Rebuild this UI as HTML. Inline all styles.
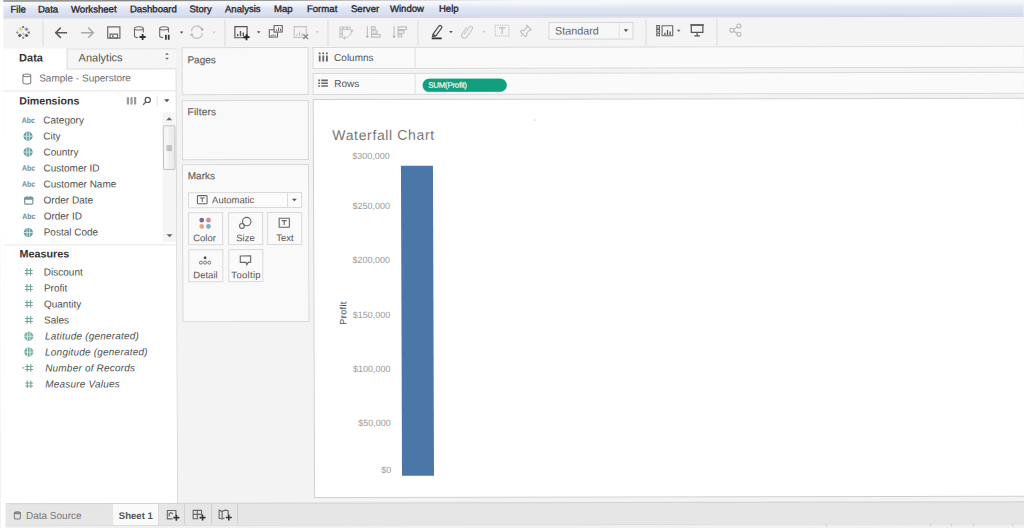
<!DOCTYPE html>
<html><head><meta charset="utf-8">
<style>
*{margin:0;padding:0;box-sizing:border-box}
html,body{width:1024px;height:528px;overflow:hidden;background:#f2f2f2;font-family:"Liberation Sans",sans-serif}
.a{position:absolute}
.t{position:absolute;white-space:nowrap;line-height:12px;height:12px}
#menu{left:4px;top:0;width:1020px;height:17px;background:linear-gradient(#fafbfd 0,#f2f4fa 25%,#e0e5f3 50%,#d9dff0 85%,#cdd3e3 100%)}
#topline{left:4px;top:0;width:1020px;height:1px;background:linear-gradient(to right,#505050,#5a5a5a 110px,#959595 250px,#d5d5d8 420px,#f3f4f8 520px)}
#menu .t{top:3px;font-size:9.6px;color:#2a2a30;-webkit-text-stroke:0.35px #2a2a30}
#tool{left:4px;top:17px;width:1020px;height:30px;background:#f4f4f4;border-top:1px solid #cdd2de}
.sep{position:absolute;top:20px;width:1px;height:26px;background:#d9d9d9}
#lp{left:4px;top:48px;width:173px;height:455px;background:#fff;border-right:1px solid #d8d8d8}
#mid{left:177px;top:47px;width:137px;height:456px;background:#f3f3f3}
.card{position:absolute;background:#f9f9f9;border:1px solid #d9d9d9}
.shelf{position:absolute;left:313px;width:711px;background:#fafafa;border:1px solid #d9d9d9;border-right:none}
#canvas{left:313px;top:99px;width:711px;height:399px;background:#fff;border:1px solid #cfcfcf;border-right:none}
#tabs{left:6px;top:503px;width:1018px;height:22px;background:#e6e6e6;border-top:1px solid #d2d2d2}
#status{left:6px;top:525px;width:1018px;height:3px;background:#f0f0f0;border-top:1px solid #dcdcdc}
.fld{font-size:10px;color:#505050}
.ic{position:absolute}
</style></head><body>
<div id="root" style="position:absolute;left:0;top:0;width:1024px;height:528px;transform-origin:320px 180px;transform:rotate(-0.1deg) skewX(0.095deg)">
<div class="a" style="left:0;top:0;width:1024px;height:528px;background:#f3f3f3"></div>
<div class="a" style="left:0;top:0;width:4px;height:528px;background:#fff"></div>

<!-- menu -->
<div id="menu" class="a">
  <div id="topline" class="a" style="left:0"></div>
  <span class="t" style="left:7px">File</span>
  <span class="t" style="left:34.5px">Data</span>
  <span class="t" style="left:67.5px">Worksheet</span>
  <span class="t" style="left:126.5px">Dashboard</span>
  <span class="t" style="left:186px">Story</span>
  <span class="t" style="left:221.5px">Analysis</span>
  <span class="t" style="left:270.5px">Map</span>
  <span class="t" style="left:303.5px">Format</span>
  <span class="t" style="left:347.5px">Server</span>
  <span class="t" style="left:386.5px">Window</span>
  <span class="t" style="left:435.5px">Help</span>
</div>

<!-- toolbar -->
<div id="tool" class="a"></div>
<div class="sep" style="left:43px"></div>
<div class="sep" style="left:225px"></div>
<div class="sep" style="left:328px"></div>
<div class="sep" style="left:418px"></div>
<div class="sep" style="left:646px"></div>
<div class="sep" style="left:717px"></div>

<!-- left data panel -->
<div id="lp" class="a"></div>
<div class="a" style="left:67px;top:48px;width:110px;height:21px;background:#f6f6f6;border-left:1px solid #dcdcdc;border-bottom:1px solid #dcdcdc;border-top:1px solid #e0e0e0"></div>
<span class="t" style="left:19.5px;top:51px;font-size:11px;font-weight:bold;color:#333">Data</span>
<span class="t" style="left:79px;top:51px;font-size:11px;color:#555">Analytics</span>
<span class="t fld" style="left:39.5px;top:72px;color:#6e6e6e">Sample - Superstore</span>
<div class="a" style="left:4px;top:90px;width:172px;height:1px;background:#e6e6e6"></div>
<span class="t" style="left:19.5px;top:94px;font-size:10.6px;font-weight:bold;color:#333">Dimensions</span>
<span class="t fld" style="left:43.5px;top:113.5px">Category</span>
<span class="t fld" style="left:43.5px;top:129.5px">City</span>
<span class="t fld" style="left:43.5px;top:145.5px">Country</span>
<span class="t fld" style="left:43.5px;top:161.5px">Customer ID</span>
<span class="t fld" style="left:43.5px;top:177.5px">Customer Name</span>
<span class="t fld" style="left:43.5px;top:193.5px">Order Date</span>
<span class="t fld" style="left:43.5px;top:209.5px">Order ID</span>
<span class="t fld" style="left:43.5px;top:225.5px">Postal Code</span>
<div class="a" style="left:4px;top:244px;width:172px;height:1px;background:#e6e6e6"></div>
<span class="t" style="left:19.2px;top:247px;font-size:10.8px;font-weight:bold;color:#333">Measures</span>
<span class="t fld" style="left:43.5px;top:266px">Discount</span>
<span class="t fld" style="left:43.5px;top:282px">Profit</span>
<span class="t fld" style="left:43.5px;top:298px">Quantity</span>
<span class="t fld" style="left:43.5px;top:314px">Sales</span>
<span class="t fld" style="left:44.5px;top:330px;font-style:italic;letter-spacing:0.2px">Latitude (generated)</span>
<span class="t fld" style="left:44.5px;top:346px;font-style:italic;letter-spacing:0.2px">Longitude (generated)</span>
<span class="t fld" style="left:44.5px;top:362px;font-style:italic;letter-spacing:0.2px">Number of Records</span>
<span class="t fld" style="left:44.5px;top:378px;font-style:italic;letter-spacing:0.2px">Measure Values</span>

<!-- middle column -->
<div id="mid" class="a"></div>
<div class="card" style="left:182px;top:47px;width:127px;height:48px"></div>
<div class="card" style="left:182px;top:100px;width:127px;height:60px"></div>
<div class="card" style="left:182px;top:164px;width:127px;height:158px"></div>
<span class="t" style="left:187.8px;top:53.5px;font-size:10px;color:#666;-webkit-text-stroke:0.2px #666">Pages</span>
<span class="t" style="left:187.8px;top:105.5px;font-size:10px;color:#666;-webkit-text-stroke:0.2px #666;letter-spacing:0.2px">Filters</span>
<span class="t" style="left:187.8px;top:170px;font-size:10px;color:#666;-webkit-text-stroke:0.2px #666">Marks</span>
<div class="a" style="left:188px;top:192px;width:114px;height:16px;background:#fbfbfb;border:1px solid #dadada"></div>
<div class="a" style="left:287px;top:193px;width:1px;height:14px;background:#dadada"></div>
<span class="t" style="left:212px;top:194px;font-size:9.5px;color:#555">Automatic</span>
<div class="card" style="left:188px;top:212px;width:35px;height:33px;background:#fafafa"></div>
<div class="card" style="left:228px;top:212px;width:35px;height:33px;background:#fafafa"></div>
<div class="card" style="left:267px;top:212px;width:35px;height:33px;background:#fafafa"></div>
<div class="card" style="left:188px;top:249px;width:35px;height:33px;background:#fafafa"></div>
<div class="card" style="left:228px;top:249px;width:35px;height:33px;background:#fafafa"></div>
<span class="t" style="left:193px;top:231.5px;font-size:9.5px;color:#555">Color</span>
<span class="t" style="left:236px;top:231.5px;font-size:9.5px;color:#555">Size</span>
<span class="t" style="left:276px;top:231.5px;font-size:9.5px;color:#555">Text</span>
<span class="t" style="left:193px;top:268.5px;font-size:9.5px;color:#555">Detail</span>
<span class="t" style="left:231px;top:268.5px;font-size:9.5px;color:#555;letter-spacing:0.3px">Tooltip</span>

<!-- shelves -->
<div class="shelf" style="top:47px;height:22px"></div>
<div class="shelf" style="top:73px;height:22px"></div>
<div class="a" style="left:415px;top:48px;width:1px;height:20px;background:#e0e0e0"></div>
<div class="a" style="left:415px;top:74px;width:1px;height:20px;background:#e0e0e0"></div>
<span class="t" style="left:334.5px;top:51.5px;font-size:10px;color:#555">Columns</span>
<span class="t" style="left:334.5px;top:77.5px;font-size:10px;color:#555">Rows</span>
<div class="a" style="left:422.5px;top:78.5px;width:84px;height:13px;border-radius:7px;background:#139f7f;box-shadow:0 0 0.6px 0.4px #9fe8d8"></div>
<span class="t" style="left:428.5px;top:80px;font-size:8px;color:#eefaf5;letter-spacing:-0.3px;-webkit-text-stroke:0.2px #eefaf5">SUM(Profit)</span>

<!-- canvas -->
<div id="canvas" class="a"></div>
<div class="a" style="left:534px;top:120px;width:2px;height:1px;background:#d8d8d8"></div>

<span class="t" style="left:332.5px;top:127px;font-size:14px;height:16px;line-height:16px;color:#777;letter-spacing:0.64px">Waterfall Chart</span>
<span class="t" style="left:352.3px;top:150px;font-size:9px;color:#999">$300,000</span>
<span class="t" style="left:352.3px;top:200px;font-size:9px;color:#999">$250,000</span>
<span class="t" style="left:352.3px;top:253.5px;font-size:9px;color:#999">$200,000</span>
<span class="t" style="left:352.3px;top:308.5px;font-size:9px;color:#999">$150,000</span>
<span class="t" style="left:352.3px;top:362.5px;font-size:9px;color:#999">$100,000</span>
<span class="t" style="left:357.3px;top:416.5px;font-size:9px;color:#999">$50,000</span>
<span class="t" style="left:380.3px;top:464px;font-size:9px;color:#999">$0</span>
<span class="t" style="left:331px;top:307px;font-size:9px;color:#5a5a5a;-webkit-text-stroke:0.15px #5a5a5a;letter-spacing:0.4px;transform:rotate(-90deg)">Profit</span>
<div class="a" style="left:401px;top:166px;width:32px;height:310px;background:#4a77a7"></div>

<div class="a" style="left:0;top:0;width:1024px;height:528px;transform:translate(-1px,-0.4px)">
<!-- tabs -->
<div id="tabs" class="a"></div>
<div id="status" class="a"></div>
<div class="a" style="left:826px;top:525px;width:1px;height:3px;background:#cfcfcf"></div><div class="a" style="left:930px;top:525px;width:1px;height:3px;background:#cfcfcf"></div><div class="a" style="left:951px;top:525px;width:1px;height:3px;background:#cfcfcf"></div><div class="a" style="left:973px;top:525px;width:1px;height:3px;background:#cfcfcf"></div><div class="a" style="left:1012px;top:525px;width:1px;height:3px;background:#cfcfcf"></div>
<div class="a" style="left:112.5px;top:504px;width:46px;height:21px;background:#fafafa"></div>
<span class="t" style="left:25.8px;top:510px;font-size:10px;color:#777">Data Source</span>
<span class="t" style="left:118.6px;top:510px;font-size:9.6px;font-weight:bold;color:#555">Sheet 1</span>
<div class="a" style="left:158px;top:504px;width:1px;height:21px;background:#d6d6d6"></div><div class="a" style="left:184px;top:504px;width:1px;height:21px;background:#d0d0d0"></div>
<div class="a" style="left:211px;top:504px;width:1px;height:21px;background:#d0d0d0"></div>
<div class="a" style="left:237px;top:504px;width:1px;height:21px;background:#d0d0d0"></div>
</div>

<svg class="a" style="left:0;top:0" width="1024" height="528" viewBox="0 0 1024 528">
<g id="logo" stroke-linecap="butt">
  <path d="M21.2 26.6v4.4M19 28.8h4.4" stroke="#e3d58e" stroke-width="1.6"/>
  <path d="M23.7 25.6v2M22.7 26.6h2" stroke="#6e6e72" stroke-width="1.3"/>
  <path d="M27 27v3.6M25.2 28.8h3.6" stroke="#8f8f9e" stroke-width="1.5"/>
  <path d="M17.8 31v2M16.8 32h2" stroke="#8a8585" stroke-width="1.3"/>
  <path d="M29.3 31v2M28.3 32h2" stroke="#5f6068" stroke-width="1.3"/>
  <path d="M23.7 32v2.8M22.3 33.4h2.8" stroke="#d7b8c0" stroke-width="1.3"/>
  <path d="M20.3 33.2v3.4M18.6 34.9h3.4" stroke="#5e5458" stroke-width="1.5"/>
  <path d="M27 33.2v3.4M25.3 34.9h3.4" stroke="#5a5c6a" stroke-width="1.5"/>
  <path d="M23.7 36.2v2M22.7 37.2h2" stroke="#77777e" stroke-width="1.3"/>
</g>
<!-- back / forward -->
<path d="M67.6 32.3H56.2M61.3 27.2l-5.1 5.1 5.1 5.1" fill="none" stroke="#5a5a5a" stroke-width="1.5"/>
<path d="M81.6 32.3H93.8M88.7 27.2l5.1 5.1-5.1 5.1" fill="none" stroke="#a9a9a9" stroke-width="1.5"/>
<!-- save -->
<g fill="none" stroke="#6a6a6a" stroke-width="1.2">
 <rect x="108.2" y="26.6" width="12.2" height="11.2"/>
 <rect x="110.6" y="33.8" width="7.4" height="4"/>
</g>
<rect x="112.6" y="35" width="1.6" height="1.6" fill="#6a6a6a"/>
<!-- db + -->
<g fill="none" stroke="#6a6a6a" stroke-width="1.1">
 <ellipse cx="139.4" cy="28.1" rx="4.4" ry="1.6"/>
 <path d="M135 28.1v7.6c0 1 1.4 1.6 3.4 1.7M143.8 28.1v4.2"/>
</g>
<path d="M143.1 33.6v6.2M140 36.7h6.2" stroke="#333" stroke-width="1.8"/>
<!-- db pause -->
<g fill="none" stroke="#6a6a6a" stroke-width="1.1">
 <ellipse cx="164.6" cy="28.1" rx="4.4" ry="1.6"/>
 <path d="M160.2 28.1v7.6c0 1 1.4 1.6 3.4 1.7M169 28.1v4.2"/>
</g>
<path d="M166.4 34.4v5M169.2 34.4v5" stroke="#333" stroke-width="1.7"/>
<path d="M180.3 31.2h3.6l-1.8 2.2z" fill="#555"/>
<!-- refresh -->
<g fill="none" stroke="#c4c4c4" stroke-width="1.3">
 <path d="M192 31a5.4 5.4 0 0 1 10.2-2.2"/>
 <path d="M202.8 33a5.4 5.4 0 0 1-10.2 2.2"/>
</g>
<circle cx="202.6" cy="29.2" r="1.3" fill="#b0b0b0"/><circle cx="192.2" cy="34.6" r="1.3" fill="#b0b0b0"/>
<path d="M213 31.2h3.4l-1.7 2z" fill="#c8c8c8"/>
<!-- new worksheet -->
<g fill="none" stroke="#555" stroke-width="1.2">
 <rect x="235.4" y="26.4" width="12.2" height="11.2"/>
</g>
<path d="M238.2 36v-2.2M241 36v-5.2M243.8 36v-3.6" stroke="#555" stroke-width="1.4"/>
<path d="M247 34v6.2M243.9 37.1h6.2" stroke="#222" stroke-width="1.8"/>
<path d="M257.4 31.2h3.6l-1.8 2.2z" fill="#555"/>
<!-- duplicate -->
<g fill="#f2f2f2" stroke="#6a6a6a" stroke-width="1.1">
 <rect x="269.8" y="29.6" width="8.2" height="7.4"/>
 <rect x="274.6" y="25.4" width="8.2" height="6.6"/>
</g>
<path d="M277 31v-1.6M279 31v-3.6M281 31v-2.4M271.8 36v-1.2M273.6 36v-1.8M275.6 36v-1.4" stroke="#6a6a6a" stroke-width="1"/>
<!-- clear -->
<g fill="none" stroke="#c2c2c2" stroke-width="1.1">
 <rect x="294.7" y="26.6" width="12" height="10.8"/>
 <path d="M297.5 36v-2M300 36v-4.6M302.6 36v-3"/>
</g>
<path d="M303.8 34.2l4.8 4.8M308.6 34.2l-4.8 4.8" stroke="#8a8a8a" stroke-width="1.3"/>
<path d="M316.2 31.2h3.4l-1.7 2z" fill="#c8c8c8"/>
<!-- swap -->
<g fill="none" stroke="#c6c6c6" stroke-width="1.1">
 <rect x="340.4" y="27" width="2.6" height="2.6"/><rect x="344.2" y="27" width="2.6" height="2.6"/><rect x="348" y="27" width="2.6" height="2.6"/>
 <rect x="340.4" y="30.8" width="2.6" height="2.6"/><rect x="340.4" y="34.6" width="2.6" height="2.6"/>
 <path d="M352.2 31a8 8 0 0 1-7.2 7"/>
</g>
<path d="M345.6 36l-2.2 2 2.2 2z" fill="#c0c0c0"/><path d="M350.6 31.4l2-2.4 1.6 2.6z" fill="#c0c0c0"/>
<!-- sort asc -->
<g fill="none" stroke="#bdbdbd" stroke-width="1.1">
 <path d="M367.8 26.4v10"/>
 <rect x="372" y="27" width="3.6" height="2.6"/><rect x="372" y="30.8" width="5.8" height="2.6"/><rect x="372" y="34.6" width="8.6" height="2.6"/>
</g>
<path d="M365.9 36h3.8l-1.9 2.4z" fill="#b5b5b5"/>
<!-- sort desc -->
<g fill="none" stroke="#bdbdbd" stroke-width="1.1">
 <path d="M394.6 26.4v10"/>
 <rect x="398.6" y="27" width="8.4" height="2.6"/><rect x="398.6" y="30.8" width="5.8" height="2.6"/><rect x="398.6" y="34.6" width="3.6" height="2.6"/>
</g>
<path d="M392.7 36h3.8l-1.9 2.4z" fill="#b5b5b5"/>
<!-- highlighter -->
<path d="M433.6 34.4l5.8-8a1.6 1.6 0 0 1 2.6 1.9l-5.8 8z M433.6 34.4l-0.6 2.4 2.6-0.5" fill="none" stroke="#555" stroke-width="1.3" stroke-linejoin="round"/>
<path d="M432.2 38.6h10" stroke="#333" stroke-width="1.6"/>
<path d="M449.6 31.2h3.6l-1.8 2.2z" fill="#555"/>
<!-- paperclip -->
<path d="M464.8 34.6l5-7.4a1.8 1.8 0 0 1 3 2l-5.6 8.2a2.8 2.8 0 0 1-4.6-3.2l4.6-6.8" fill="none" stroke="#c6c6c6" stroke-width="1.1"/>
<path d="M482.6 31.2h3.4l-1.7 2z" fill="#c8c8c8"/>
<!-- text box -->
<rect x="495.8" y="25.6" width="13.6" height="10.8" fill="none" stroke="#c4c4c4" stroke-width="1" stroke-dasharray="1.4 0.8"/>
<path d="M499.4 28.2h6.4M502.6 28.2v6" stroke="#b8b8b8" stroke-width="1.1"/>
<!-- pin -->
<path d="M527.4 25.8l4.4 4.4-2 0.6-2.8 3 .2 2.2-1.2 1.2-5.2-5.2 1.2-1.2 2.2.2 3-2.8z M523.6 33.6l-2 3.2" fill="none" stroke="#bdbdbd" stroke-width="1.1"/>
<!-- standard dropdown -->
<rect x="549.5" y="23" width="84" height="16.6" fill="#f7f7f7" stroke="#d6d6d6" stroke-width="1"/>
<path d="M619.7 23.5v15.6" stroke="#e2e2e2" stroke-width="1"/>
<path d="M624.2 29.8h4.6l-2.3 2.8z" fill="#555"/>
<!-- show me -->
<g fill="none" stroke="#666" stroke-width="1.1">
 <rect x="657.2" y="26.2" width="2.8" height="2.6"/><rect x="657.2" y="30" width="2.8" height="2.6"/><rect x="657.2" y="33.8" width="2.8" height="2.6"/>
 <rect x="662.6" y="26.4" width="10.6" height="10"/>
</g>
<path d="M665.4 35.6v-2.2M668 35.6v-5M670.6 35.6v-3.6" stroke="#555" stroke-width="1.3"/>
<path d="M677.4 30.4h3.6l-1.8 2.2z" fill="#666"/>
<!-- presentation -->
<g fill="none" stroke="#555" stroke-width="1.2">
 <path d="M690.8 25.6h13.6"/>
 <rect x="691.8" y="25.8" width="11.6" height="7.2"/>
 <path d="M697.6 33v3.4M694.8 36.6h5.6"/>
</g>
<!-- share -->
<g fill="none" stroke="#b8b8b8" stroke-width="1.1">
 <circle cx="739.4" cy="26.8" r="2"/><circle cx="739.4" cy="35" r="2"/><circle cx="732.4" cy="30.9" r="2"/>
 <path d="M734.2 29.9l3.4-2M734.2 31.9l3.4 2"/>
</g>
<g transform="translate(0,-0.6)">
<!-- panel icons -->

<g fill="none" stroke="#777" stroke-width="1.1">
 <path d="M165.6 55.2l1.8-2 1.8 2z" fill="#666" stroke="none"/>
 <path d="M165.6 58.2l1.8 2 1.8-2z" fill="#666" stroke="none"/>
</g>
<!-- db icon sample superstore -->
<g fill="none" stroke="#777" stroke-width="1">
 <ellipse cx="27.2" cy="75.4" rx="3.9" ry="1.4"/>
 <path d="M23.3 75.4v7.2c0 .9 1.7 1.5 3.9 1.5s3.9-.6 3.9-1.5v-7.2"/>
</g>
<!-- dimension header icons -->
<g stroke="#8a8a8a" stroke-width="1.2">
 <path d="M128.2 97.4v7.4M131.8 97.4v7.4M135.4 97.4v7.4" stroke-width="2.2" stroke="#9a9a9a"/>
</g>
<g fill="none" stroke="#555" stroke-width="1.2">
 <circle cx="148" cy="100.2" r="2.6"/><path d="M146 102.4l-2.6 2.6"/>
</g>
<path d="M157.5 95.5v11.6" stroke="#e2e2e2" stroke-width="1"/>
<path d="M164.4 99.6h5.4l-2.7 3z" fill="#555"/>
<!-- scrollbar -->
<rect x="162.6" y="112.5" width="13.4" height="130" fill="#f5f5f5"/>
<path d="M166.4 120.6h6l-3-3z" fill="#666"/>
<rect x="163.5" y="126.2" width="11.6" height="43.6" rx="1.2" fill="#ebebeb" stroke="#c4c4c4" stroke-width="1"/><rect x="164.2" y="127" width="4.6" height="42" fill="#f6f6f6"/><rect x="168.8" y="127" width="3.4" height="42" fill="#eeeeee"/>
<path d="M166.6 146.4h5.4M166.6 148.4h5.4M166.6 150.4h5.4" stroke="#888" stroke-width="0.9"/>
<path d="M166.4 234.6h6l-3 3z" fill="#666"/>
<text x="22" y="123.1" font-family="Liberation Sans" font-size="8" font-weight="bold" fill="#6f8d96" textLength="13.2" lengthAdjust="spacingAndGlyphs">Abc</text>
<g><circle cx="28.2" cy="136.3" r="4.6" fill="#6a9fa6"/><path d="M23.6 136.3h9.2M26.9 132.1v8.4M29.5 132.1v8.4" stroke="#d4ecea" stroke-width="0.9"/></g>
<g><circle cx="28.2" cy="152.2" r="4.6" fill="#6a9fa6"/><path d="M23.6 152.2h9.2M26.9 148v8.4M29.5 148v8.4" stroke="#d4ecea" stroke-width="0.9"/></g>
<text x="22" y="170.8" font-family="Liberation Sans" font-size="8" font-weight="bold" fill="#6f8d96" textLength="13.2" lengthAdjust="spacingAndGlyphs">Abc</text>
<text x="22" y="186.8" font-family="Liberation Sans" font-size="8" font-weight="bold" fill="#6f8d96" textLength="13.2" lengthAdjust="spacingAndGlyphs">Abc</text>
<g><rect x="24.6" y="197.4" width="8.2" height="6.8" rx="1" fill="none" stroke="#6f969c" stroke-width="1.2"/><rect x="24.6" y="197.2" width="8.2" height="2.6" fill="#6f969c"/><path d="M26.8 196.4v1.4M30.6 196.4v1.4" stroke="#6f969c" stroke-width="1.2"/></g>
<text x="22" y="219.1" font-family="Liberation Sans" font-size="8" font-weight="bold" fill="#6f8d96" textLength="13.2" lengthAdjust="spacingAndGlyphs">Abc</text>
<g><circle cx="28.2" cy="232.6" r="4.6" fill="#6a9fa6"/><path d="M23.6 232.6h9.2M26.9 228.4v8.4M29.5 228.4v8.4" stroke="#d4ecea" stroke-width="0.9"/></g>
<path d="M26.6 268.2v7.6M30.2 268.2v7.6M24.6 270.6h7.8M24.6 273.6h7.8" stroke="#6aa898" stroke-width="1.05"/>
<path d="M26.6 284.2v7.6M30.2 284.2v7.6M24.6 286.6h7.8M24.6 289.6h7.8" stroke="#6aa898" stroke-width="1.05"/>
<path d="M26.6 300.2v7.6M30.2 300.2v7.6M24.6 302.6h7.8M24.6 305.6h7.8" stroke="#6aa898" stroke-width="1.05"/>
<path d="M26.6 316.2v7.6M30.2 316.2v7.6M24.6 318.6h7.8M24.6 321.6h7.8" stroke="#6aa898" stroke-width="1.05"/>
<g><circle cx="28.2" cy="336.4" r="4.6" fill="#78b4a6"/><path d="M23.6 336.4h9.2M26.9 332.2v8.4M29.5 332.2v8.4" stroke="#d4ecea" stroke-width="0.9"/></g>
<g><circle cx="28.2" cy="352.2" r="4.6" fill="#78b4a6"/><path d="M23.6 352.2h9.2M26.9 348v8.4M29.5 348v8.4" stroke="#d4ecea" stroke-width="0.9"/></g>
<path d="M26.6 364.2v7.6M30.2 364.2v7.6M24.6 366.6h7.8M24.6 369.6h7.8" stroke="#6aa898" stroke-width="1.05"/><path d="M21.6 368h2" stroke="#7fb2a4" stroke-width="1.4"/>
<path d="M26.6 380.59999999999997v7.6M30.2 380.59999999999997v7.6M24.6 383.0h7.8M24.6 386.0h7.8" stroke="#6aa898" stroke-width="1.05"/>
</g>
<g fill="none" stroke="#666" stroke-width="1.1">
 <rect x="197.4" y="195.4" width="9.6" height="8.2" rx="0.8"/>
 <path d="M199.8 197.8h4.8M202.2 197.8v4"/>
</g>
<path d="M291.8 198.6h5l-2.5 2.6z" fill="#555"/>
<circle cx="201.6" cy="220" r="2.4" fill="#7b6b92"/>
<circle cx="208.3" cy="220" r="2.4" fill="#cf8b9b"/>
<circle cx="201.6" cy="226.2" r="2.4" fill="#e0aa88"/>
<circle cx="208.3" cy="226.2" r="2.4" fill="#86a8c4"/>
<g fill="none" stroke="#666" stroke-width="1.1">
 <circle cx="246.6" cy="221.4" r="4.2"/>
 <circle cx="241.8" cy="225.8" r="2.4"/>
</g>
<g fill="none" stroke="#666" stroke-width="1.1">
 <rect x="279" y="218.2" width="10.2" height="9"/>
 <path d="M281.6 220.6h5M284.1 220.6v4.4"/>
</g>
<circle cx="204.8" cy="257.6" r="1.5" fill="#555"/>
<g fill="none" stroke="#666" stroke-width="0.9">
 <circle cx="200.6" cy="262.4" r="1.5"/><circle cx="204.8" cy="262.4" r="1.5"/><circle cx="209" cy="262.4" r="1.5"/>
</g>
<path d="M240 255.8h10.4v6.4h-2.4l-1.4 2.4-1-2.4H240z" fill="none" stroke="#666" stroke-width="1.1"/>
<!-- shelf icons -->
<g fill="#666">
 <rect x="319.2" y="52.6" width="1.8" height="1.6"/><rect x="322.8" y="52.6" width="1.8" height="1.6"/><rect x="326.4" y="52.6" width="1.8" height="1.6"/>
 <rect x="319.2" y="55.4" width="1.8" height="6"/><rect x="322.8" y="55.4" width="1.8" height="6"/><rect x="326.4" y="55.4" width="1.8" height="6"/>
 <rect x="318.6" y="79.6" width="1.8" height="1.6"/><rect x="318.6" y="82.4" width="1.8" height="1.6"/><rect x="318.6" y="85.2" width="1.8" height="1.6"/>
 <rect x="321.6" y="79.6" width="6.6" height="1.6"/><rect x="321.6" y="82.4" width="6.6" height="1.6"/><rect x="321.6" y="85.2" width="6.6" height="1.6"/>
</g>
<g transform="translate(-1,-1.2)">
<!-- tab icons -->
<g fill="none" stroke="#777" stroke-width="1">
 <path d="M14.2 513.4v5.2c0 .7 1.3 1.1 3 1.1s3-.4 3-1.1v-5.2"/><ellipse cx="17.2" cy="513.4" rx="3" ry="1.1" fill="#999"/>
</g>
<g fill="none" stroke="#666" stroke-width="1.1">
 <path d="M175.8 516.6v-5.2h-8.6v8.4h5.2"/>
 <path d="M169 517.4v-2.6l1.8-1.4 2 1.6"/>
</g>
<path d="M176.2 515.6v6M173.2 518.6h6" stroke="#333" stroke-width="1.6"/>
<g fill="none" stroke="#666" stroke-width="1.1">
 <path d="M201.4 516.6v-5.2h-8.4v8.4h5.2M193 515.4h8.4M197.2 511.4v8.4"/>
</g>
<path d="M202.4 515.6v6M199.4 518.6h6" stroke="#333" stroke-width="1.6"/>
<g fill="none" stroke="#666" stroke-width="1.1">
 <path d="M228 516.6v-4.8l-3-.6-3 1.2-3-1.2v8.2l3 .6 2.4-1"/>
 <path d="M222 512v8"/>
</g>
<path d="M228.6 515.6v6M225.6 518.6h6" stroke="#333" stroke-width="1.6"/>
</g>
</svg>
<span class="t" style="left:555.5px;top:25px;font-size:10.8px;color:#666">Standard</span>
</div>
</body></html>
